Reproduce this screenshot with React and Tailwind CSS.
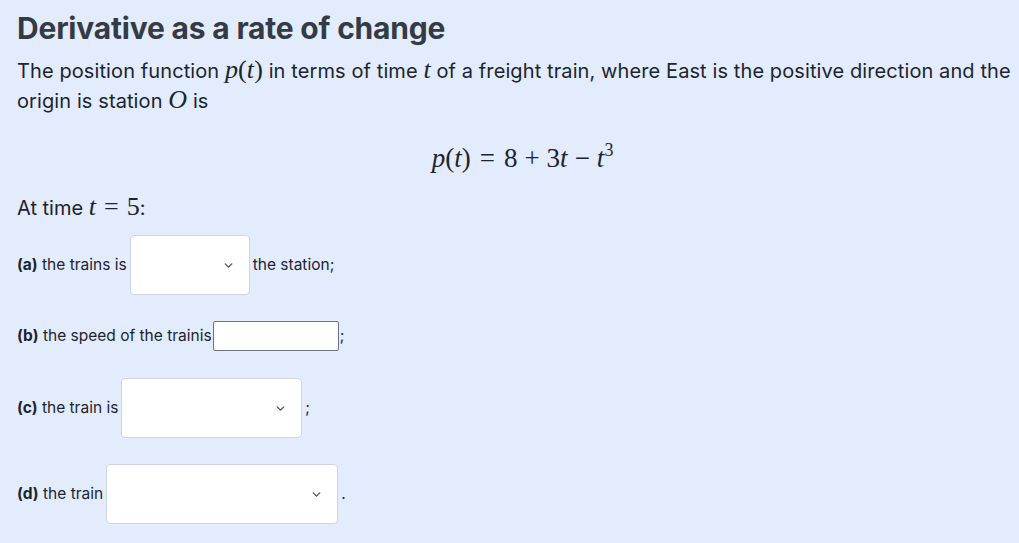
import { ChevronDown } from 'lucide-react';

const body = { fontFamily: 'Inter, "Noto Sans", sans-serif' };
const mathFont = { fontFamily: '"Liberation Serif", "DejaVu Serif", serif' };

function M({ children, className = '' }) {
  return (
    <span className={`text-[1.3em] leading-[0] ${className}`} style={mathFont}>
      {children}
    </span>
  );
}

function I({ children }) {
  return <i className="italic">{children}</i>;
}

function Dropdown({ w }) {
  return (
    <div className={`${w} h-[60px] bg-white border border-[#d1d5db] rounded-[4px] flex items-center justify-end pr-[14px] mx-[3px] shrink-0`}>
      <ChevronDown className="w-[13px] h-[13px] text-[#4b5563]" strokeWidth={2.5} />
    </div>
  );
}

export default function App() {
  return (
    <div className="bg-[#e2ecfd] text-[#1c2430] px-[17px] pt-[10px] w-[1019px] h-[543px] overflow-hidden" style={body}>
      <h1 className="text-[30px] leading-[36px] font-bold text-[#343b45] tracking-[-0.2px]">
        Derivative as a rate of change
      </h1>
      <p className="text-[20px] leading-[30px] mt-[10px] w-[1000px] tracking-[0.1px]">
        The position function <M><I>p</I>(<I>t</I>)</M> in terms of time <M><I>t</I></M> of a freight train, where East is the positive direction and the origin is station <M><I>O</I></M> is
      </p>
      <div className="flex justify-center pl-[26px] mt-[27px]">
        <span className="text-[27px] leading-[30px]" style={mathFont}>
          <I>p</I>(<I>t</I>)<span className="mx-[9px]">=</span>8<span className="mx-[7px]">+</span>3<I>t</I><span className="mx-[7px]">−</span><I>t</I>
          <sup className="text-[18px] relative top-[-11px]">3</sup>
        </span>
      </div>
      <p className="text-[20px] leading-[30px] mt-[20px]">
        At time <M><I>t</I><span className="mx-[8px]">=</span>5</M>:
      </p>

      <div className="text-[15.5px] mt-[12px] flex flex-col">
        <div className="flex items-center h-[60px]">
          <span><b>(a)</b> the trains is</span>
          <Dropdown w="w-[120px]" />
          <span>the station;</span>
        </div>
        <div className="flex items-center mt-[26px] h-[30px]">
          <span><b>(b)</b> the speed of the trainis</span>
          <div className="w-[126px] h-[30px] bg-white border border-[#6b7280] rounded-[2px] mx-[1px]" />
          <span>;</span>
        </div>
        <div className="flex items-center mt-[27px] h-[60px]">
          <span><b>(c)</b> the train is</span>
          <Dropdown w="w-[181px]" />
          <span>;</span>
        </div>
        <div className="flex items-center mt-[26px] h-[60px]">
          <span><b>(d)</b> the train</span>
          <Dropdown w="w-[232px]" />
          <span>.</span>
        </div>
      </div>
    </div>
  );
}
